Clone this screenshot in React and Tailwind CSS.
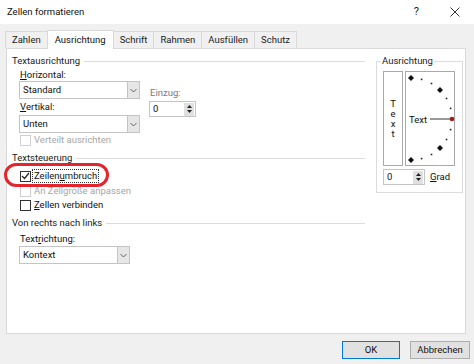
import React from "react";

const Chevron = () => (
  <svg width="7" height="5" viewBox="0 0 7 5">
    <path d="M0.5 1l3 3 3-3" fill="none" stroke="#606060" strokeWidth="1" />
  </svg>
);

function Select({ value, className }) {
  return (
    <div className={`flex h-[18px] border border-[#c4c4c4] bg-white ${className}`}>
      <div className="flex flex-1 items-center pl-[3px] text-[#111]">{value}</div>
      <div className="flex w-[12px] items-center justify-center border-l border-[#c4c4c4] bg-[#e6e6e6]">
        <Chevron />
      </div>
    </div>
  );
}

function Spin({ className }) {
  return (
    <div className={`flex h-[16px] items-center border border-[#c4c4c4] bg-white pr-[1px] ${className}`}>
      <div className="flex-1 pl-[3px] text-[#111]">0</div>
      <div className="flex h-[13px] w-[10px] flex-col items-center justify-center gap-[2px] bg-[#e0e0e0]">
        <svg width="5" height="3" viewBox="0 0 5 3"><path d="M0 3h5L2.5 0z" fill="#222" /></svg>
        <svg width="5" height="3" viewBox="0 0 5 3"><path d="M0 0h5L2.5 3z" fill="#222" /></svg>
      </div>
    </div>
  );
}

function Box({ checked, disabled }) {
  return (
    <span
      className={`flex h-[11px] w-[11px] shrink-0 items-center justify-center border bg-white ${
        disabled ? "border-[#cfcfcf]" : "border-[#333333]"
      }`}
    >
      {checked && (
        <svg width="9" height="8" viewBox="0 0 9 8">
          <path d="M1 4l2.5 2.5L8 1" fill="none" stroke="#222" strokeWidth="1.2" />
        </svg>
      )}
    </span>
  );
}

function CheckRow({ children, checked, disabled, focus }) {
  return (
    <div className={`flex h-[14px] items-center pl-[1px] ${disabled ? "text-[#a6a6a6]" : "text-[#111]"}`}>
      <Box checked={checked} disabled={disabled} />
      <span className={`ml-[1px] px-[1px] leading-[12px] ${focus ? "border border-dotted border-[#333]" : "border border-transparent"}`}>
        {children}
      </span>
    </div>
  );
}

function Header({ children, className = "" }) {
  return (
    <div className={`flex h-[14px] items-center text-[#1a1a1a] ${className}`}>
      <span className="pr-[4px]">{children}</span>
      <div className="h-px flex-1 bg-[#dcdcdc]" />
    </div>
  );
}

function Arc() {
  const dots = [];
  for (let a = 90; a >= -90; a -= 15) {
    const r = (a * Math.PI) / 180;
    const x = 5 + 41 * Math.cos(r);
    const y = 47 - 41 * Math.sin(r);
    if (a === 0) {
      dots.push(<circle key={a} cx={x} cy={y} r="2.3" fill="#a11d1d" />);
    } else if (a % 45 === 0) {
      dots.push(
        <path key={a} d={`M${x} ${y - 3}L${x + 3} ${y}L${x} ${y + 3}L${x - 3} ${y}z`} fill="#111" />
      );
    } else {
      dots.push(<rect key={a} x={x - 0.8} y={y - 0.8} width="1.6" height="1.6" fill="#222" />);
    }
  }
  return (
    <svg width="48" height="93" viewBox="0 0 48 93" className="overflow-visible">
      <text x="3" y="50.5" fontSize="9.5" fill="#111" fontFamily="Roboto, 'Liberation Sans', sans-serif">
        Text
      </text>
      <line x1="24" y1="47" x2="44" y2="47" stroke="#333" strokeWidth="1" />
      {dots}
    </svg>
  );
}

export default function App() {
  const tabs = ["Zahlen", "Ausrichtung", "Schrift", "Rahmen", "Ausfüllen", "Schutz"];
  return (
    <div className="relative flex h-[364px] w-[474px] flex-col overflow-hidden bg-[#f0f0f0] font-['Roboto','Liberation_Sans',sans-serif] text-[9.5px] text-[#111]">
      {/* title bar */}
      <div className="flex h-[24px] items-center bg-white pl-[7px] pr-[14px]">
        <span className="flex-1 text-[9.5px] text-[#111]">Zellen formatieren</span>
        <span className="mr-[31px] text-[11px] text-[#222]">?</span>
        <svg width="10" height="10" viewBox="0 0 10 10">
          <path d="M0.5 0.5l9 9M9.5 0.5l-9 9" stroke="#333" strokeWidth="1" />
        </svg>
      </div>

      {/* tabs */}
      <div className="relative z-10 mt-[5px] flex items-end pl-[5px]">
        {tabs.map((t, i) =>
          i === 1 ? (
            <div key={t} className="-ml-px flex h-[19px] translate-y-[1px] items-center border border-b-0 border-[#d9d9d9] bg-white px-[7px] text-[#111]">
              {t}
            </div>
          ) : (
            <div key={t} className={`${i === 0 ? "" : "-ml-px"} flex h-[17px] items-center border border-b-0 border-[#d9d9d9] bg-[#f0f0f0] px-[6px] text-[#222]`}>
              {t}
            </div>
          )
        )}
      </div>

      {/* panel */}
      <div className="ml-[6px] flex h-[286px] w-[460px] border border-[#d9d9d9] bg-white">
        <div className="flex w-[369px] flex-col pl-[5px] pr-[11px] pt-[5px]">
          <Header>Textausrichtung</Header>
          <div className="flex flex-col pl-[7px]">
            <div className="h-[13px] pl-[1px] leading-[13px]">
              <u>H</u>orizontal:
            </div>
            <div className="flex">
              <div className="flex flex-col">
                <Select value="Standard" className="w-[121px]" />
                <div className="flex h-[16px] items-center pl-[1px]">
                  <u>V</u>ertikal:
                </div>
                <Select value="Unten" className="w-[121px]" />
              </div>
              <div className="ml-[9px] flex flex-col pt-[6px]">
                <div className="h-[12px] pl-[1px] leading-[12px] text-[#7a7a7a]">Einzug:</div>
                <Spin className="mt-[2px] w-[47px]" />
              </div>
            </div>
            <CheckRow disabled>Verteilt ausrichten</CheckRow>
          </div>

          <Header className="mt-[4px]">Textsteuerung</Header>
          <div className="mt-[4px] flex flex-col pl-[7px]">
            <CheckRow checked focus>
              Zeilen<u>u</u>mbruch
            </CheckRow>
            <div className="mt-[1px]">
              <CheckRow disabled>An Zellgröße anpassen</CheckRow>
            </div>
            <CheckRow>
              <u>Z</u>ellen verbinden
            </CheckRow>
          </div>

          <Header className="mt-[4px]">Von rechts nach links</Header>
          <div className="mt-[2px] flex flex-col pl-[7px]">
            <div className="flex h-[14px] items-center pl-[1px]">
              Text<u>r</u>ichtung:
            </div>
            <Select value="Kontext" className="h-[17px] w-[111px]" />
          </div>
        </div>

        {/* Ausrichtung group */}
        <div className="pt-[5px]">
          <fieldset className="h-[139px] w-[87px] border border-[#dcdcdc] px-[6px]">
            <legend className="ml-[-2px] h-[14px] px-[1px] leading-[14px] text-[#1a1a1a]">Ausrichtung</legend>
            <div className="mt-[3px] flex gap-[2px]">
              <div className="flex h-[95px] w-[20px] flex-col items-center justify-center border border-[#a9a9a9] leading-[10px] text-[#111]">
                <span>T</span>
                <span>e</span>
                <span>x</span>
                <span>t</span>
              </div>
              <div className="h-[95px] w-[50px] border border-[#a9a9a9]">
                <Arc />
              </div>
            </div>
            <div className="mt-[3px] flex items-center">
              <Spin className="w-[42px]" />
              <span className="ml-[5px] text-[#111]">
                <u>G</u>rad
              </span>
            </div>
          </fieldset>
        </div>
      </div>

      {/* buttons */}
      <div className="mt-[7px] flex justify-end gap-[10px] pr-[4px]">
        <div className="flex h-[18px] w-[58px] items-center justify-center border border-[#0078d7] bg-[#e1e1e1] text-[#111]">
          OK
        </div>
        <div className="flex h-[18px] w-[60px] items-center justify-center border border-[#adadad] bg-[#e1e1e1] text-[#111]">
          Abbrechen
        </div>
      </div>

      {/* red annotation */}
      <div className="absolute left-[4px] top-[163px] h-[24px] w-[105px] rounded-[12px] border-[3px] border-[#e3262d]" />
    </div>
  );
}
